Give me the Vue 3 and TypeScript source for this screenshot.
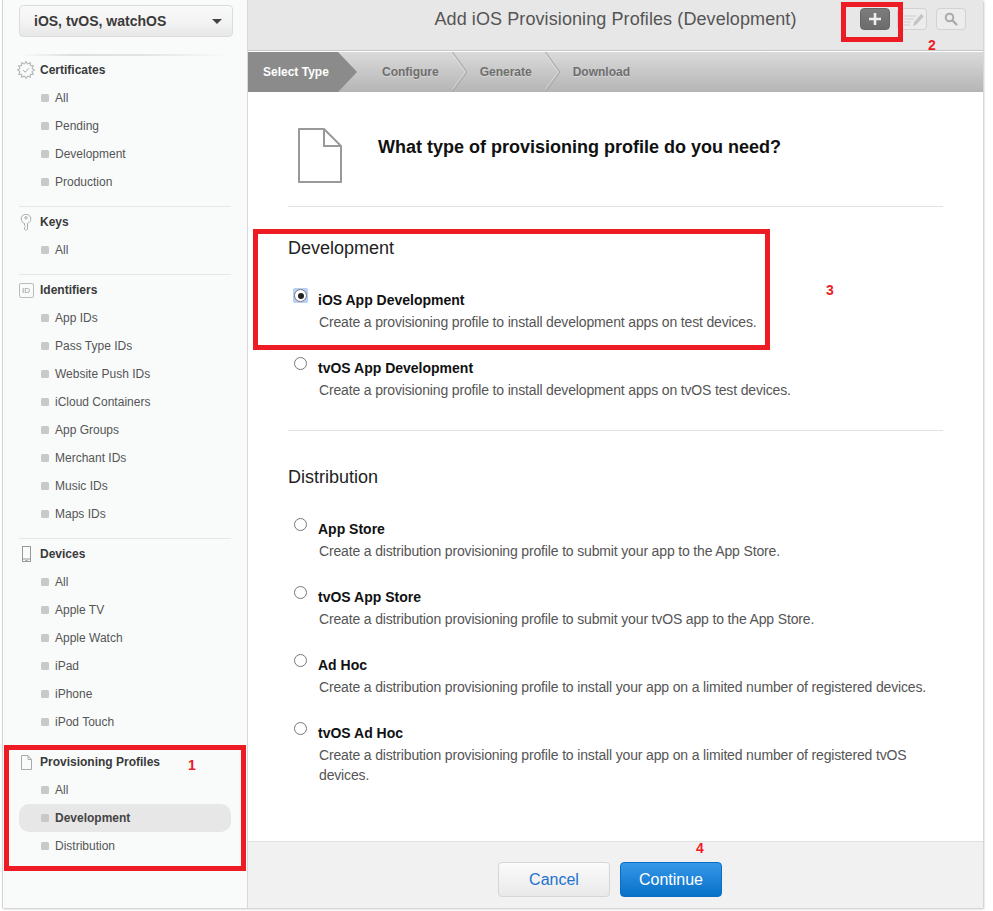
<script setup lang="ts">
interface NavSection { title: string; icon: string; items: string[] }
interface ProfileOption { name: string; desc: string; selected?: boolean }

const sections: NavSection[] = [
  { title: 'Certificates', icon: 'cert', items: ['All', 'Pending', 'Development', 'Production'] },
  { title: 'Keys', icon: 'key', items: ['All'] },
  { title: 'Identifiers', icon: 'id', items: ['App IDs', 'Pass Type IDs', 'Website Push IDs', 'iCloud Containers', 'App Groups', 'Merchant IDs', 'Music IDs', 'Maps IDs'] },
  { title: 'Devices', icon: 'device', items: ['All', 'Apple TV', 'Apple Watch', 'iPad', 'iPhone', 'iPod Touch'] },
  { title: 'Provisioning Profiles', icon: 'doc', items: ['All', 'Development', 'Distribution'] },
]

const development: ProfileOption[] = [
  { name: 'iOS App Development', desc: 'Create a provisioning profile to install development apps on test devices.', selected: true },
  { name: 'tvOS App Development', desc: 'Create a provisioning profile to install development apps on tvOS test devices.' },
]
const distribution: ProfileOption[] = [
  { name: 'App Store', desc: 'Create a distribution provisioning profile to submit your app to the App Store.' },
  { name: 'tvOS App Store', desc: 'Create a distribution provisioning profile to submit your tvOS app to the App Store.' },
  { name: 'Ad Hoc', desc: 'Create a distribution provisioning profile to install your app on a limited number of registered devices.' },
  { name: 'tvOS Ad Hoc', desc: 'Create a distribution provisioning profile to install your app on a limited number of registered tvOS devices.' },
]
const groups = [
  { title: 'Development', options: development },
  { title: 'Distribution', options: distribution },
]

const starPoints = Array.from({ length: 24 }, (_, i) => {
  const a = (i / 24) * Math.PI * 2
  const r = i % 2 === 0 ? 8.6 : 6.1
  return `${(9 + r * Math.cos(a)).toFixed(2)},${(9 + r * Math.sin(a)).toFixed(2)}`
}).join(' ')

const isActive = (section: NavSection, item: string) =>
  section.title === 'Provisioning Profiles' && item === 'Development'
</script>

<template>
  <div class="page">
    <div class="shell">
      <aside class="sidebar">
        <div class="select">
          <span>iOS, tvOS, watchOS</span>
          <i class="caret"></i>
        </div>
        <div class="fade-rule"></div>
        <nav>
          <section v-for="s in sections" :key="s.title" class="nav-section">
            <h4 class="nav-title">
              <span class="nav-icon">
                <svg v-if="s.icon === 'cert'" width="18" height="18" viewBox="0 0 18 18" fill="none">
                  <polygon :points="starPoints" stroke="#aaa" stroke-width="1" />
                  <path d="M6 9l2.2 2.2 3.8-4" stroke="#aaa" stroke-width="1" />
                </svg>
                <svg v-else-if="s.icon === 'key'" width="12" height="17" viewBox="0 0 12 17" fill="none" stroke="#aaa" stroke-width="1">
                  <path d="M4.5 9.5C2.5 8.6 1.2 7 1.2 5a4.8 4.8 0 0 1 9.6 0c0 2-1.3 3.6-3.3 4.5v5.5L6 16.5 4.5 15v-1.5l1-1-1-1z" />
                  <circle cx="6" cy="3.8" r="1.2" />
                </svg>
                <span v-else-if="s.icon === 'id'" class="id-badge">ID</span>
                <svg v-else-if="s.icon === 'device'" width="9" height="16" viewBox="0 0 9 16" fill="none" stroke="#999" stroke-width="1">
                  <rect x="0.5" y="0.5" width="8" height="15" />
                  <path d="M0.5 13h8M3.5 14.5h2" />
                </svg>
                <svg v-else width="11" height="15" viewBox="0 0 11 15" fill="none" stroke="#aaa" stroke-width="1">
                  <path d="M0.5 0.5H7L10.5 4.5V14.5H0.5Z" />
                  <path d="M7 0.5V4.5H10.5" />
                </svg>
              </span>
              {{ s.title }}
            </h4>
            <ul>
              <li v-for="item in s.items" :key="item" :class="{ active: isActive(s, item) }">
                <i class="bullet"></i>{{ item }}
              </li>
            </ul>
          </section>
        </nav>
      </aside>

      <main class="main">
        <header class="topbar">
          <span></span>
          <h1>Add iOS Provisioning Profiles (Development)</h1>
          <div class="tools">
            <button class="tool on" aria-label="Add">
              <svg width="14" height="14" viewBox="0 0 14 14"><path d="M5.7 1h2.6v4.7H13v2.6H8.3V13H5.7V8.3H1V5.7h4.7z" fill="#eee" /></svg>
            </button>
            <button class="tool edit" aria-label="Edit">
              <svg width="22" height="15" viewBox="0 0 22 15" fill="none">
                <path d="M1 4h12M1 7h10M1 10h7M1 13h6" stroke="#ccc" stroke-width="1" />
                <path d="M10 14l1.2-4 7-8 2.6 2.2-7 8z" fill="#c4c4c4" />
              </svg>
            </button>
            <button class="tool" aria-label="Search">
              <svg width="14" height="14" viewBox="0 0 14 14" fill="none" stroke="#aaa">
                <circle cx="5.5" cy="5.5" r="3.8" stroke-width="2" />
                <path d="M8.5 8.5l4.5 4.5" stroke-width="2.4" />
              </svg>
            </button>
          </div>
        </header>

        <div class="steps">
          <div class="step-active">Select Type</div>
          <span class="step first">Configure</span>
          <svg class="chev" width="15" height="40" viewBox="0 0 15 40" fill="none">
            <path d="M0.5 0L15 20L0.5 40" stroke="#a6a6a6" />
            <path d="M0 1L14 20L0 39" stroke="#e2e2e2" stroke-opacity=".6" transform="translate(-1 0)" />
          </svg>
          <span class="step">Generate</span>
          <svg class="chev" width="15" height="40" viewBox="0 0 15 40" fill="none">
            <path d="M0.5 0L15 20L0.5 40" stroke="#a6a6a6" />
            <path d="M0 1L14 20L0 39" stroke="#e2e2e2" stroke-opacity=".6" transform="translate(-1 0)" />
          </svg>
          <span class="step">Download</span>
        </div>

        <div class="content">
          <div class="intro">
            <svg width="46" height="57" viewBox="0 0 46 57" fill="none" stroke="#999" stroke-width="2">
              <path d="M2 2H27L44 19V55H2Z" stroke-linejoin="round" />
              <path d="M27 2V19H44" />
            </svg>
            <h2>What type of provisioning profile do you need?</h2>
          </div>

          <section v-for="g in groups" :key="g.title" class="group">
            <h3>{{ g.title }}</h3>
            <div v-for="o in g.options" :key="o.name" class="option">
              <span class="radio-wrap" :class="{ focus: o.selected }">
                <span class="radio" :class="{ checked: o.selected }"></span>
              </span>
              <div class="option-text">
                <strong>{{ o.name }}</strong>
                <p>{{ o.desc }}</p>
              </div>
            </div>
          </section>
        </div>

        <footer class="footer">
          <button class="btn cancel">Cancel</button>
          <button class="btn continue">Continue</button>
        </footer>
      </main>
    </div>

    <div class="mark" style="left:4px;top:745px;width:242px;height:126px"></div>
    <div class="mark" style="left:841px;top:2px;width:62px;height:40px"></div>
    <div class="mark" style="left:253px;top:229px;width:517px;height:121px"></div>
    <span class="num" style="left:188px;top:757px">1</span>
    <span class="num" style="left:928px;top:37px">2</span>
    <span class="num" style="left:826px;top:282px">3</span>
    <span class="num" style="left:696px;top:840px">4</span>
  </div>
</template>

<style>
html, body { background: #fff; }
</style>

<style scoped>
.page {
  position: relative;
  width: 993px;
  height: 911px;
  overflow: hidden;
  background: #fff;
  font-family: "Liberation Sans", Arial, sans-serif;
}
.shell {
  display: flex;
  width: 981px;
  height: 908px;
  margin-left: 2px;
  border-left: 1px solid #d4d4d4;
  box-shadow: 1px 1px 2px #c4c4c4;
  box-sizing: border-box;
}
.sidebar {
  flex: none;
  width: 212px;
  background: #f9fbfb;
  border-right: 1px solid #d8d8d8;
  padding: 5px 16px 0 16px;
}
.select {
  display: flex;
  align-items: center;
  justify-content: space-between;
  height: 30px;
  margin-right: -2px;
  padding: 0 10px 0 14px;
  border: 1px solid #dcdcdc;
  border-radius: 4px;
  background: linear-gradient(#f9f9f9, #f4f4f4 50%, #e7e7e7);
  font-size: 14px;
  font-weight: bold;
  color: #3a3a3a;
}
.caret {
  width: 0;
  height: 0;
  border-left: 5px solid transparent;
  border-right: 5px solid transparent;
  border-top: 5px solid #444;
}
.fade-rule {
  height: 2px;
  margin: 17px 0 0;
  background: linear-gradient(90deg, transparent, #dedede 25%, #e4e4e4 60%, transparent);
}
nav { display: block; }
.nav-section { border-top: 1px solid #e6e6e6; padding: 1px 0 10px; }
.nav-section:first-child { border-top: 0; padding-top: 0; }
.nav-title {
  display: flex;
  align-items: center;
  height: 28px;
  margin: 0 0 0 21px;
  font-size: 12px;
  font-weight: bold;
  color: #3a3a3a;
  position: relative;
}
.nav-icon {
  position: absolute;
  left: -24px;
  width: 20px;
  display: flex;
  justify-content: center;
  align-items: center;
}
.id-badge {
  width: 13px;
  height: 13px;
  border: 1px solid #bbb;
  border-radius: 2px;
  font-size: 8px;
  font-weight: normal;
  color: #999;
  line-height: 13px;
  text-align: center;
}
ul { list-style: none; margin: 0; padding: 0; }
li {
  display: flex;
  align-items: center;
  height: 28px;
  padding-left: 22px;
  font-size: 12px;
  color: #555;
  border-radius: 10px;
}
li.active { background: #e7e7e7; font-weight: bold; color: #444; }
.bullet {
  width: 8px;
  height: 8px;
  margin-right: 6px;
  border-radius: 1.5px;
  background: #c8c8c8;
}
.main {
  flex: 1;
  display: flex;
  flex-direction: column;
  min-width: 0;
  background: #fff;
}
.topbar {
  display: grid;
  grid-template-columns: 1fr auto 1fr;
  align-items: center;
  height: 50px;
  flex: none;
  background: #e7e7e7;
  border-bottom: 1px solid #c6c6c6;
}
.topbar h1 {
  margin: 0 0 11px;
  font-size: 18px;
  font-weight: normal;
  letter-spacing: 0.09px;
  color: #555;
  white-space: nowrap;
}
.tools {
  display: flex;
  justify-content: flex-end;
  gap: 7px;
  padding-right: 17px;
  margin-bottom: 12px;
}
.tool {
  display: flex;
  align-items: center;
  justify-content: center;
  width: 30px;
  height: 22px;
  padding: 0;
  border: 1px solid #d2d2d2;
  border-radius: 4px;
  background: #ececec;
}
.tool:last-child { margin-left: 2px; }
.tool.edit svg { margin-left: 4px; }
.tool.on {
  background: linear-gradient(#7c7c7c, #6c6c6c);
  border-color: #666;
}
.steps {
  display: flex;
  align-items: center;
  height: 40px;
  margin-top: 1px;
  flex: none;
  background: linear-gradient(#dadada, #b5b5b5);
  font-size: 12px;
  font-weight: bold;
}
.step-active {
  display: flex;
  align-items: center;
  width: 94px;
  height: 40px;
  padding-left: 15px;
  color: #fff;
  background: #8b8b8b;
  clip-path: polygon(0 0, 90px 0, 109px 50%, 90px 100%, 0 100%);
}
.step { color: #6e6e6e; text-shadow: 0 1px 0 rgba(255, 255, 255, .35); }
.step.first { margin-left: 25px; }
.chev { margin: 0 13px; flex: none; }
.content { flex: 1; padding: 0 40px; min-height: 0; }
.intro {
  display: flex;
  align-items: flex-start;
  gap: 35px;
  height: 115px;
  padding: 35px 0 0 9px;
  box-sizing: border-box;
  border-bottom: 1px solid #e2e2e2;
}
.intro svg { flex: none; }
.intro h2 {
  margin: 10px 0 0;
  font-size: 18px;
  font-weight: bold;
  color: #111;
}
.group { padding: 30px 0 30px; }
.group + .group { border-top: 1px solid #e2e2e2; padding-top: 35px; }
h3 {
  margin: 0 0 30px;
  font-size: 18px;
  font-weight: normal;
  line-height: 22px;
  color: #222;
}
.option {
  display: flex;
  margin-bottom: 25px;
}
.option:last-child { margin-bottom: 0; }
.radio-wrap {
  flex: none;
  display: flex;
  align-items: center;
  justify-content: center;
  width: 15px;
  height: 15px;
  margin: -1px 10px 0 5px;
  border-radius: 2px;
}
.radio-wrap.focus { background: #b6cff4; }
.radio {
  width: 11px;
  height: 11px;
  border: 1px solid #777;
  border-radius: 50%;
  background: #fff;
  position: relative;
}
.radio.checked::after {
  content: "";
  position: absolute;
  left: 2.5px;
  top: 2.5px;
  width: 6px;
  height: 6px;
  border-radius: 50%;
  background: #222;
}
.option-text strong {
  display: block;
  font-size: 14px;
  line-height: 22px;
  color: #111;
}
.option-text p {
  margin: 0 0 0 1px;
  font-size: 14px;
  line-height: 20px;
  letter-spacing: -0.155px;
  color: #555;
  max-width: 622px;
  padding-top: 1px;
}
.footer {
  display: flex;
  justify-content: center;
  gap: 10px;
  height: 67px;
  flex: none;
  padding: 20px 11px 0 0;
  box-sizing: border-box;
  background: #f1f1f1;
  border-top: 1px solid #e0e0e0;
}
.btn {
  height: 35px;
  border-radius: 4px;
  font-family: inherit;
  font-size: 16px;
}
.cancel {
  width: 112px;
  border: 1px solid #d6d6d6;
  background: linear-gradient(#fbfbfb, #e9e9e9);
  color: #2272cf;
}
.continue {
  width: 102px;
  border: 1px solid #0a6cc4;
  background: linear-gradient(#3798e8, #0670c8);
  color: #fff;
}
.mark {
  position: absolute;
  box-sizing: border-box;
  border: 5px solid #ed1c24;
}
.num {
  position: absolute;
  font-size: 14px;
  font-weight: bold;
  line-height: 16px;
  color: #ed1c24;
}
</style>
